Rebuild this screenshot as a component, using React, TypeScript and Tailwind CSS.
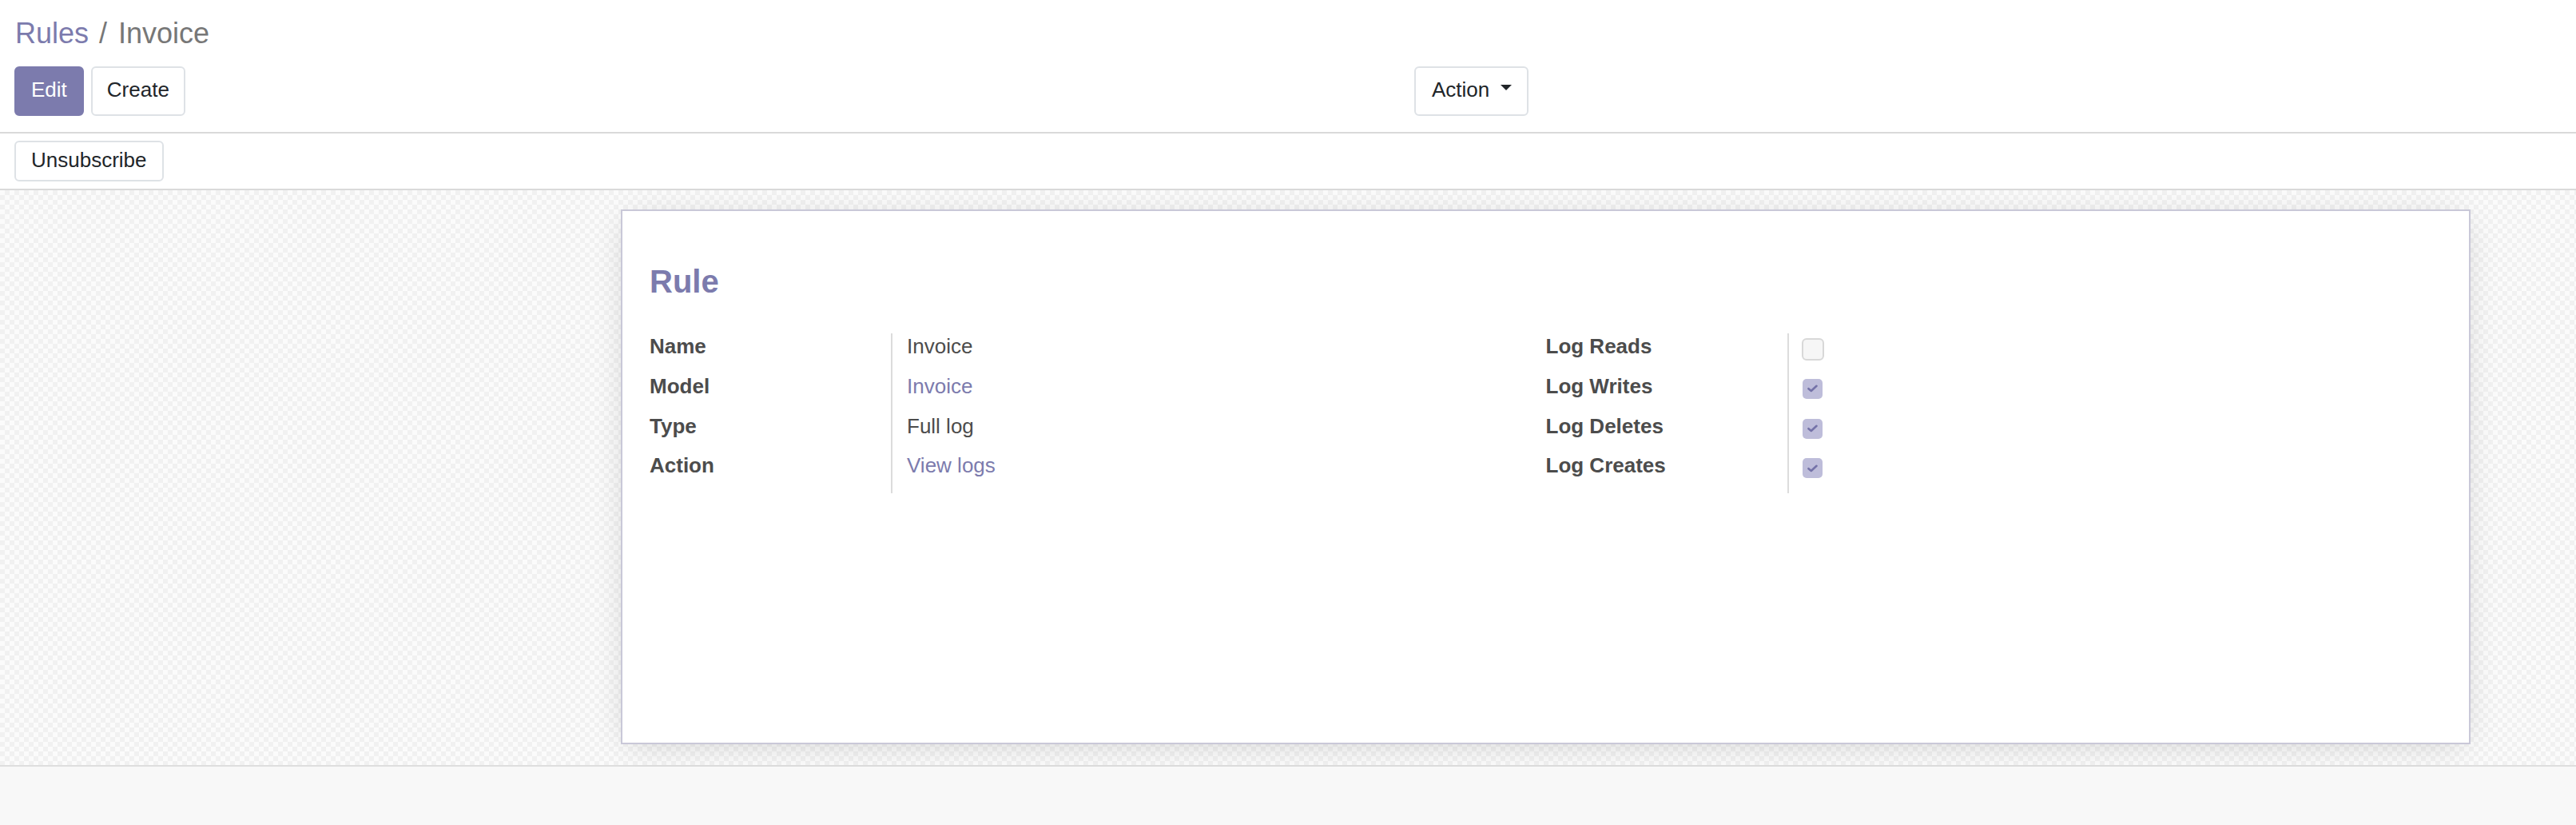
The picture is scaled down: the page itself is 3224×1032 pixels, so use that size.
import React from "react";

const fields = [
  { label: "Name", value: "Invoice", link: false },
  { label: "Model", value: "Invoice", link: true },
  { label: "Type", value: "Full log", link: false },
  { label: "Action", value: "View logs", link: true },
];

const flags = [
  { label: "Log Reads", checked: false },
  { label: "Log Writes", checked: true },
  { label: "Log Deletes", checked: true },
  { label: "Log Creates", checked: true },
];

function Checkbox({ checked }: { checked: boolean }) {
  if (!checked) {
    return <span className="block w-[28px] h-[28px] rounded-[6px] border-2 border-[#d8d8d8] bg-[#f6f6f6]" />;
  }
  return (
    <span className="flex items-center justify-center w-[25px] h-[25px] ml-[1px] rounded-[5px] bg-[#bebdda]">
      <svg width="13" height="10" viewBox="0 0 13 10" fill="none">
        <path d="M1.5 5.2 L4.8 8 L11.5 1.8" stroke="#7472a8" strokeWidth="2.6" strokeLinecap="round" strokeLinejoin="round" />
      </svg>
    </span>
  );
}

export default function App() {
  return (
    <div className="h-[1032px] flex flex-col bg-white text-[#212529] font-['Liberation_Sans',Arial,sans-serif]">
      {/* Control panel */}
      <div className="pt-[20px] pb-[20px] border-b-2 border-[#dadada]">
        <div className="pl-[19px] h-[44px] leading-[44px] text-[36px] whitespace-nowrap">
          <span className="text-[#7c7bad]">Rules</span>
          <span className="text-[#777] pl-[13px] pr-[14px]">/</span>
          <span className="text-[#777]">Invoice</span>
        </div>
        <div className="flex mt-[19px] pl-[18px]">
          <div className="w-[1752px] flex gap-[9px]">
            <button className="h-[62px] px-[19px] pb-[3px] rounded-[6px] border-2 border-[#7c7bad] bg-[#7c7bad] text-white text-[26px]">
              Edit
            </button>
            <button className="h-[62px] px-[18px] pb-[3px] rounded-[6px] border-2 border-[#dee2e6] bg-white text-[#212529] text-[26px]">
              Create
            </button>
          </div>
          <button className="h-[62px] w-[143px] pl-[20px] pb-[3px] flex items-center rounded-[6px] border-2 border-[#dee2e6] bg-white text-[#212529] text-[26px]">
            Action
            <span className="ml-[14px] -mt-[6px] w-0 h-0 border-t-[7px] border-t-[#212529] border-x-[7px] border-x-transparent" />
          </button>
        </div>
      </div>

      {/* Status bar */}
      <div className="py-[9px] pl-[18px] border-b-2 border-[#dadada]">
        <button className="h-[51px] px-[19px] pb-[3px] rounded-[6px] border-2 border-[#dee2e6] bg-white text-[#212529] text-[26px]">
          Unsubscribe
        </button>
      </div>

      {/* Sheet background */}
      <div className="pt-[24px] pb-[26px] border-b-2 border-[#dedede] bg-[#f7f7f7] bg-[conic-gradient(#f1f1f1_25%,#fbfbfb_0_50%,#f1f1f1_0_75%,#fbfbfb_0)] bg-[length:12px_12px]">
        <div className="ml-[777px] w-[2315px] h-[669px] bg-white border-2 border-[#c9c8d8] shadow-[0_6px_40px_-10px_rgba(0,0,0,0.18)] px-[34px] pt-[64px]">
          <h1 className="h-[48px] leading-[48px] text-[40px] font-bold text-[#7c7bad]">Rule</h1>
          <div className="grid grid-cols-2 mt-[41px] text-[26px] text-[#4c4c4c]">
            <div className="flex">
              <div className="w-[302px]">
                {fields.map((f) => (
                  <div key={f.label} className="h-[49.8px] leading-[32px] font-bold">
                    {f.label}
                  </div>
                ))}
              </div>
              <div className="border-l-2 border-[#dcdcdc] pl-[18px] h-[200px]">
                {fields.map((f) => (
                  <div key={f.label} className={`h-[49.8px] leading-[32px] ${f.link ? "text-[#7c7bad]" : "text-[#4c4c4c]"}`}>
                    {f.value}
                  </div>
                ))}
              </div>
            </div>
            <div className="flex">
              <div className="w-[302px]">
                {flags.map((f) => (
                  <div key={f.label} className="h-[49.8px] leading-[32px] font-bold">
                    {f.label}
                  </div>
                ))}
              </div>
              <div className="border-l-2 border-[#dcdcdc] pl-[16px] h-[200px]">
                {flags.map((f) => (
                  <div key={f.label} className="h-[49.8px]">
                    <div className="h-[39px] flex items-center">
                      <Checkbox checked={f.checked} />
                    </div>
                  </div>
                ))}
              </div>
            </div>
          </div>
        </div>
      </div>

      {/* Chatter area */}
      <div className="flex-1 bg-[#f8f8f8]" />
    </div>
  );
}
